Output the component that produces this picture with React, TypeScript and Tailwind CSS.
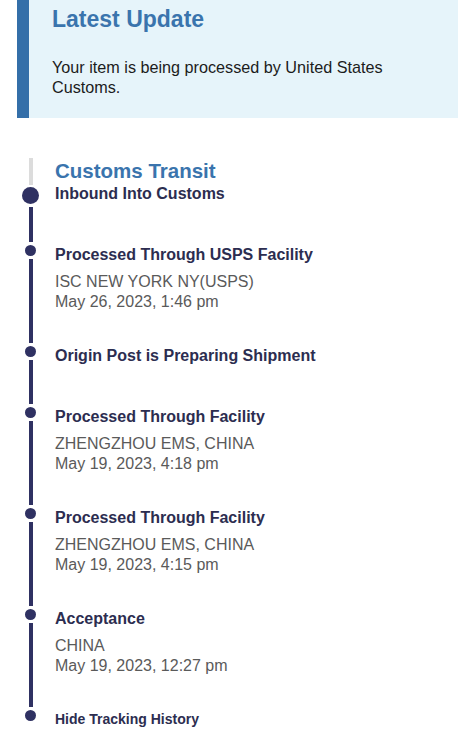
import React from "react";

type Ev = { title: string; lines: string[] };

const events: Ev[] = [
  { title: "Processed Through USPS Facility", lines: ["ISC NEW YORK NY(USPS)", "May 26, 2023, 1:46 pm"] },
  { title: "Origin Post is Preparing Shipment", lines: [] },
  { title: "Processed Through Facility", lines: ["ZHENGZHOU EMS, CHINA", "May 19, 2023, 4:18 pm"] },
  { title: "Processed Through Facility", lines: ["ZHENGZHOU EMS, CHINA", "May 19, 2023, 4:15 pm"] },
  { title: "Acceptance", lines: ["CHINA", "May 19, 2023, 12:27 pm"] },
];

export default function App() {
  return (
    <div className="w-[474px] h-[732px] bg-white overflow-hidden" style={{ fontFamily: '"Liberation Sans", Arial, Helvetica, sans-serif' }}>
      {/* Latest update box */}
      <div className="ml-[17px] mr-[16px] h-[118px] bg-[#e6f4fa] border-l-[12px] border-[#346fa9] pl-[23px] pt-[5px]">
        <div className="text-[23px] leading-[28px] font-bold text-[#3a74ad]">Latest Update</div>
        <div className="mt-[24px] text-[16.2px] leading-[20px] text-[#1c1c1c]">
          Your item is being processed by United States
          <br />
          Customs.
        </div>
      </div>

      {/* Timeline */}
      <div className="mt-[40px] flex flex-col">
        {/* Heading row */}
        <div className="flex h-[83.5px]">
          <div className="w-[55px] pl-[22px] shrink-0">
            <div className="w-[17px] h-full flex flex-col items-center">
              <div className="w-[4px] h-[27px] bg-[#dcdcdc]" />
              <div className="mt-[2px] w-[17px] h-[17px] rounded-full bg-[#2f3162]" />
              <div className="mt-[3px] w-[4px] flex-1 bg-[#2f3162]" />
            </div>
          </div>
          <div className="pt-[1px]">
            <div className="text-[20.5px] leading-[24px] font-bold text-[#3a74ad]">Customs Transit</div>
            <div className="mt-[1px] text-[16px] leading-[20px] font-bold text-[#2c2d50]">Inbound Into Customs</div>
          </div>
        </div>

        {events.map((ev, i) => (
          <div key={i} className={`flex ${ev.lines.length ? "h-[101px]" : "h-[61px]"}`}>
            <div className="w-[55px] pl-[22px] shrink-0">
              <div className="w-[17px] h-full flex flex-col items-center">
                <div className="mt-[3px] w-[11px] h-[11px] rounded-full bg-[#2f3162]" />
                <div className="mt-[3px] w-[4px] flex-1 bg-[#2f3162]" />
              </div>
            </div>
            <div className="pt-[1.5px]">
              <div className="text-[16px] leading-[24px] font-bold text-[#2c2d50]">{ev.title}</div>
              {ev.lines.length > 0 && (
                <div className="mt-[5px] text-[16px] leading-[20px] text-[#5a5a5a]">
                  {ev.lines.map((l, j) => (
                    <div key={j}>{l}</div>
                  ))}
                </div>
              )}
            </div>
          </div>
        ))}

        {/* Hide row */}
        <div className="flex h-[40px]">
          <div className="w-[55px] pl-[22px] shrink-0">
            <div className="w-[17px] h-full flex flex-col items-center">
              <div className="mt-[3px] w-[11px] h-[11px] rounded-full bg-[#2f3162]" />
            </div>
          </div>
          <div className="pt-[0px]">
            <div className="text-[14px] leading-[24px] font-bold text-[#2c2d50]">Hide Tracking History</div>
          </div>
        </div>
      </div>
    </div>
  );
}
